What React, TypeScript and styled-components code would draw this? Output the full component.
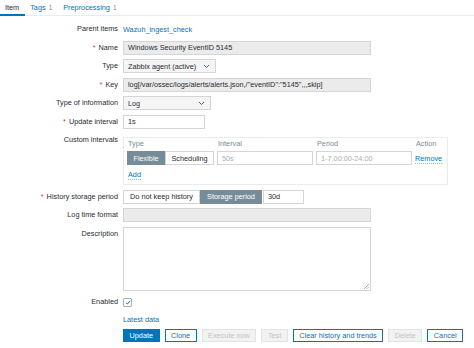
import React from "react"
import styled, { createGlobalStyle } from "styled-components"

const GlobalStyle = createGlobalStyle({
  body: {
    margin: 0,
    background: "#ffffff",
    fontFamily: '"Liberation Sans", Arial, sans-serif',
    fontSize: "7.3px",
    color: "#1f2c33",
  },
})

const Page = styled.div({
  width: "474px",
  height: "348px",
  overflow: "hidden",
})

const TabBar = styled.div({
  display: "flex",
  height: "15px",
  borderBottom: "1px solid #ebebeb",
})

const Tab = styled.div<{ $active?: boolean }>(({ $active }) => ({
  display: "flex",
  alignItems: "center",
  gap: "3px",
  padding: "0 6px 0 5px",
  color: $active ? "#1f2c33" : "#0275b8",
  borderBottom: $active ? "2px solid #0275b8" : "2px solid transparent",
  marginBottom: "-1px",
}))

const Counter = styled.span({
  color: "#768d99",
  fontSize: "6.5px",
})

const Form = styled.div({
  display: "grid",
  gridTemplateColumns: "118px 1fr",
  columnGap: "5px",
  rowGap: "4.5px",
  paddingTop: "6px",
})

const Label = styled.div<{ $top?: number }>(({ $top }) => ({
  textAlign: "right",
  lineHeight: "14px",
  whiteSpace: "nowrap",
  alignSelf: $top !== undefined ? "start" : "center",
  marginTop: $top ? `${$top}px` : 0,
}))

const Req = styled.span({
  color: "#e33734",
  marginRight: "3px",
})

const Cell = styled.div<{ $h?: number }>(({ $h }) => ({
  display: "flex",
  alignItems: "center",
  height: `${$h ?? 14}px`,
}))

const Link = styled.span({
  color: "#0275b8",
  lineHeight: "11px",
})

const ActionLink = styled.span({
  color: "#0275b8",
  borderBottom: "1px dotted rgba(2,117,184,0.5)",
  lineHeight: "9px",
})

const TextBox = styled.div<{ $w: number; $grey?: boolean; $muted?: boolean }>(
  ({ $w, $grey, $muted }) => ({
    boxSizing: "border-box",
    width: `${$w}px`,
    height: "14px",
    padding: "0 4px",
    display: "flex",
    alignItems: "center",
    whiteSpace: "nowrap",
    overflow: "hidden",
    border: "1px solid #d5d5d5",
    background: $grey ? "#ebebeb" : "#ffffff",
    color: $muted ? "#a7b0b5" : "#1f2c33",
  })
)

const SelectBox = styled(TextBox)({
  justifyContent: "space-between",
  background: "#f5f5f5",
  paddingRight: "5px",
})

const Chevron = () => (
  <svg width="7" height="5" viewBox="0 0 7 5">
    <path d="M1 1 L3.5 3.5 L6 1" fill="none" stroke="#4f5c63" strokeWidth="1" />
  </svg>
)

const IntervalsBox = styled.div({
  boxSizing: "border-box",
  width: "325px",
  border: "1px solid #ebebeb",
  padding: "1px 4px 5px 3px",
  marginTop: "4px",
})

const IntervalGrid = styled.div({
  display: "grid",
  gridTemplateColumns: "90px 99px 99px 1fr",
  rowGap: "3px",
  alignItems: "center",
})

const HeadCell = styled.div({
  color: "#768d99",
  lineHeight: "9px",
  paddingLeft: "1px",
})

const Segmented = styled.div({
  display: "flex",
})

const SegButton = styled.div<{ $on?: boolean; $w: number }>(({ $on, $w }) => ({
  boxSizing: "border-box",
  width: `${$w}px`,
  height: "14px",
  display: "flex",
  alignItems: "center",
  justifyContent: "center",
  border: `1px solid ${$on ? "#768d99" : "#d5d5d5"}`,
  background: $on ? "#768d99" : "#ffffff",
  color: $on ? "#ffffff" : "#1f2c33",
  whiteSpace: "nowrap",
}))

const AddRow = styled.div({
  marginTop: "5px",
  paddingLeft: "1px",
})

const TextArea = styled.div({
  boxSizing: "border-box",
  width: "248px",
  height: "64px",
  border: "1px solid #d5d5d5",
  position: "relative",
})

const Grip = styled.svg({
  position: "absolute",
  right: "1px",
  bottom: "1px",
})

const CheckBox = styled.div({
  boxSizing: "border-box",
  width: "9px",
  height: "9px",
  border: "1px solid #a9b2b7",
  borderRadius: "1px",
  display: "flex",
  alignItems: "center",
  justifyContent: "center",
})

const ButtonRow = styled.div({
  display: "flex",
  gap: "5px",
})

const Button = styled.div<{ $kind: "primary" | "alt" | "off" }>(({ $kind }) => ({
  boxSizing: "border-box",
  height: "13px",
  padding: "0 5.5px",
  display: "flex",
  alignItems: "center",
  whiteSpace: "nowrap",
  border: `1px solid ${$kind === "off" ? "#e3e3e3" : "#0275b8"}`,
  background: $kind === "primary" ? "#0275b8" : $kind === "off" ? "#f2f2f2" : "#ffffff",
  color: $kind === "primary" ? "#ffffff" : $kind === "off" ? "#bcc4c8" : "#0275b8",
}))

export default function App() {
  return (
    <Page>
      <GlobalStyle />
      <TabBar>
        <Tab $active>Item</Tab>
        <Tab>
          Tags <Counter>1</Counter>
        </Tab>
        <Tab>
          Preprocessing <Counter>1</Counter>
        </Tab>
      </TabBar>
      <Form>
        <Label>Parent items</Label>
        <Cell>
          <Link>Wazuh_ingest_check</Link>
        </Cell>

        <Label>
          <Req>*</Req>Name
        </Label>
        <Cell>
          <TextBox $w={248} $grey>Windows Security EventID 5145</TextBox>
        </Cell>

        <Label>Type</Label>
        <Cell>
          <SelectBox $w={93}>
            Zabbix agent (active) <Chevron />
          </SelectBox>
        </Cell>

        <Label>
          <Req>*</Req>Key
        </Label>
        <Cell>
          <TextBox $w={248} $grey>
            log[/var/ossec/logs/alerts/alerts.json,/"eventID":"5145",,,skip]
          </TextBox>
        </Cell>

        <Label>Type of information</Label>
        <Cell>
          <SelectBox $w={88}>
            Log <Chevron />
          </SelectBox>
        </Cell>

        <Label>
          <Req>*</Req>Update interval
        </Label>
        <Cell>
          <TextBox $w={82}>1s</TextBox>
        </Cell>

        <Label $top={0}>Custom intervals</Label>
        <IntervalsBox>
          <IntervalGrid>
            <HeadCell>Type</HeadCell>
            <HeadCell>Interval</HeadCell>
            <HeadCell>Period</HeadCell>
            <HeadCell>Action</HeadCell>
            <Segmented>
              <SegButton $on $w={38}>Flexible</SegButton>
              <SegButton $w={49}>Scheduling</SegButton>
            </Segmented>
            <TextBox $w={96} $muted>50s</TextBox>
            <TextBox $w={96} $muted>1-7,00:00-24:00</TextBox>
            <div>
              <ActionLink>Remove</ActionLink>
            </div>
          </IntervalGrid>
          <AddRow>
            <ActionLink>Add</ActionLink>
          </AddRow>
        </IntervalsBox>

        <Label>
          <Req>*</Req>History storage period
        </Label>
        <Cell>
          <Segmented>
            <SegButton $w={77}>Do not keep history</SegButton>
            <SegButton $on $w={62}>Storage period</SegButton>
          </Segmented>
          <TextBox $w={41} style={{ marginLeft: 1 }}>30d</TextBox>
        </Cell>

        <Label>Log time format</Label>
        <Cell>
          <TextBox $w={248} $grey />
        </Cell>

        <Label $top={0}>Description</Label>
        <TextArea>
          <Grip width="5" height="5" viewBox="0 0 5 5">
            <path d="M5 0 L0 5 M5 2.5 L2.5 5" stroke="#9aa3a8" strokeWidth="0.8" />
          </Grip>
        </TextArea>

        <Label>Enabled</Label>
        <Cell>
          <CheckBox>
            <svg width="6" height="5" viewBox="0 0 6 5">
              <path d="M0.8 2.6 L2.3 4 L5.2 0.9" fill="none" stroke="#0275b8" strokeWidth="1" />
            </svg>
          </CheckBox>
        </Cell>

        <div />
        <Cell $h={11}>
          <Link>Latest data</Link>
        </Cell>

        <div />
        <ButtonRow>
          <Button $kind="primary">Update</Button>
          <Button $kind="alt">Clone</Button>
          <Button $kind="off">Execute now</Button>
          <Button $kind="off">Test</Button>
          <Button $kind="alt">Clear history and trends</Button>
          <Button $kind="off">Delete</Button>
          <Button $kind="alt">Cancel</Button>
        </ButtonRow>
      </Form>
    </Page>
  )
}
